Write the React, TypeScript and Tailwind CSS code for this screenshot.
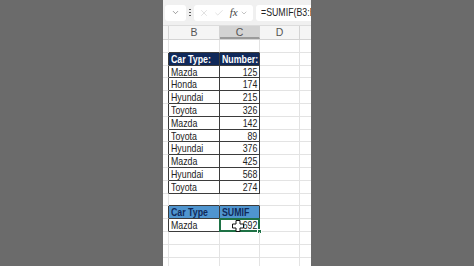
import { ChevronDown, X, Check } from "lucide-react";

type Row = {
  b?: string;
  c?: string;
  kind: "navy" | "blue" | "data" | "above" | "empty";
  sel?: boolean;
};

const data: [string, string][] = [
  ["Mazda", "125"],
  ["Honda", "174"],
  ["Hyundai", "215"],
  ["Toyota", "326"],
  ["Mazda", "142"],
  ["Toyota", "89"],
  ["Hyundai", "376"],
  ["Mazda", "425"],
  ["Hyundai", "568"],
  ["Toyota", "274"],
];

const rows: Row[] = [
  { kind: "above" },
  { b: "Car Type:", c: "Number:", kind: "navy" },
  ...data.map(([b, c]) => ({ b, c, kind: "data" as const })),
  { kind: "above" },
  { b: "Car Type", c: "SUMIF", kind: "blue" },
  { b: "Mazda", c: "692", kind: "data", sel: true },
  { kind: "empty" },
  { kind: "empty" },
  { kind: "empty" },
];

const font = { fontFamily: '"Liberation Sans", Arial, sans-serif' };

// narrow text, like Aptos Narrow in the sheet
function Narrow({ children, right }: { children?: string; right?: boolean }) {
  return (
    <span className={`inline-block whitespace-nowrap scale-x-[0.8] ${right ? "origin-right" : "origin-left"}`}>
      {children}
    </span>
  );
}

function Cursor() {
  return (
    <svg width="12" height="12" viewBox="0 0 12 12" className="absolute left-[12px] top-[1px]">
      <path
        d="M4 0.5h4v3.5h3.5v4H8v3.5H4V8H0.5V4H4z"
        fill="#fff"
        stroke="#111"
        strokeWidth="1"
        strokeLinejoin="round"
      />
    </svg>
  );
}

function SheetRow({ row }: { row: Row }) {
  const inTable = row.kind === "navy" || row.kind === "blue" || row.kind === "data";
  const head = row.kind === "navy" || row.kind === "blue";
  const tone =
    row.kind === "navy"
      ? "bg-[#10295a] text-white font-bold"
      : row.kind === "blue"
        ? "bg-[#4f95cf] text-[#10295a] font-bold"
        : "text-[#222]";
  const edge = inTable || row.kind === "above" ? "border-b-[#3b3b3b]" : "border-b-[#e3e3e3]";
  const side = inTable ? "border-r-[#3b3b3b]" : "border-r-[#e3e3e3]";

  return (
    <div className="flex h-[12.8px] text-[11px] leading-[12px]" style={font}>
      <div className={`w-[6px] shrink-0 border-b border-r border-b-[#e3e3e3] ${side}`} />
      <div className={`w-[51px] shrink-0 overflow-hidden border-b border-r pl-[2px] ${edge} ${side} ${inTable ? tone : ""}`}>
        <Narrow>{row.b}</Narrow>
      </div>
      <div
        className={`relative w-[40px] shrink-0 border-b border-r ${edge} ${side} ${inTable ? tone : ""} ${
          head ? "pl-[2px] text-left" : "pr-[2px] text-right"
        }`}
      >
        <Narrow right={!head}>{row.c}</Narrow>
        {row.sel && (
          <>
            <div className="absolute -left-[1px] -top-[1px] -right-[1px] -bottom-[1px] border-2 border-[#1e7145]" />
            <div className="absolute -bottom-[3px] -right-[3px] h-[5px] w-[5px] border border-white bg-[#1e7145]" />
            <Cursor />
          </>
        )}
      </div>
      <div className="w-[40px] shrink-0 border-b border-r border-[#e3e3e3]" />
      <div className="flex-1 border-b border-[#e3e3e3]" />
    </div>
  );
}

function Toolbar() {
  return (
    <div className="flex h-[26px] items-center border-b border-[#dcdcdc] bg-[#f0f0f0]">
      <div className="ml-[2px] flex h-[16px] w-[21px] items-center justify-center rounded-[3px] bg-white">
        <ChevronDown size={9} strokeWidth={1.5} className="text-[#555]" />
      </div>
      <div className="mx-[2px] flex w-[4px] flex-col items-center gap-[1.5px]">
        <span className="h-[1.5px] w-[1.5px] rounded-full bg-[#444]" />
        <span className="h-[1.5px] w-[1.5px] rounded-full bg-[#444]" />
        <span className="h-[1.5px] w-[1.5px] rounded-full bg-[#444]" />
      </div>
      <div className="flex h-[16px] w-[59px] items-center justify-around rounded-[3px] bg-white px-[2px]">
        <X size={10} strokeWidth={1.2} className="text-[#c4c4c4]" />
        <Check size={10} strokeWidth={1.2} className="text-[#c4c4c4]" />
        <span className="text-[11px] italic text-[#444]" style={{ fontFamily: '"Liberation Serif", serif' }}>
          fx
        </span>
        <ChevronDown size={8} strokeWidth={1.5} className="-ml-[3px] text-[#888]" />
      </div>
      <div
        className="ml-[3px] flex h-[16px] flex-1 items-center overflow-hidden rounded-l-[3px] bg-white pl-[5px] text-[11px] text-[#222]"
        style={font}
      >
        <Narrow>=SUMIF(B3:B12,B14,C3:C12)</Narrow>
      </div>
    </div>
  );
}

function ColumnHeaders() {
  return (
    <div className="flex h-[14px] border-b border-[#d4d4d4] bg-[#f5f5f5] text-[10.5px] leading-[13px] text-[#555]" style={font}>
      <div className="w-[6px] shrink-0 border-r border-[#d4d4d4]" />
      <div className="w-[51px] shrink-0 border-r border-[#d4d4d4] text-center">B</div>
      <div className="w-[40px] shrink-0 border-b-2 border-r border-b-[#9a9a9a] border-r-[#d4d4d4] bg-[#d3d3d3] text-center">C</div>
      <div className="w-[40px] shrink-0 border-r border-[#d4d4d4] text-center">D</div>
      <div className="flex-1" />
    </div>
  );
}

export default function App() {
  return (
    <div className="flex h-[266px] w-[474px] overflow-hidden bg-[#6b6b6b]">
      <div className="w-[163px] shrink-0" />
      <div className="w-[148px] shrink-0 overflow-hidden bg-white">
        <Toolbar />
        <ColumnHeaders />
        {rows.map((row, i) => (
          <SheetRow key={i} row={row} />
        ))}
      </div>
      <div className="flex-1" />
    </div>
  );
}
